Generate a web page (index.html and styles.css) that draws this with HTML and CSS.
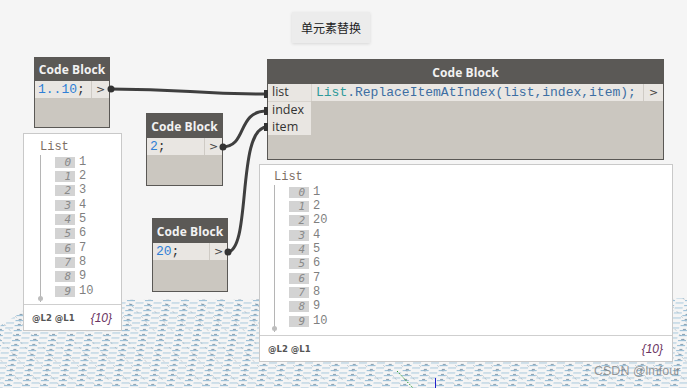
FILE: index.html
```html
<!DOCTYPE html>
<html>
<head>
<meta charset="utf-8">
<link rel="stylesheet" href="styles.css">
</head>
<body>
<div class="canvas">
  <svg class="floor" width="687" height="388" viewBox="0 0 687 388">
    <defs>
      <pattern id="tiles" width="18" height="5" patternUnits="userSpaceOnUse" patternTransform="skewX(-10)">
        <line x1="0" y1="0.5" x2="8" y2="0.5" stroke="#97bdd5" stroke-width="1"/>
        <line x1="9" y1="3" x2="17" y2="3" stroke="#a3c6dc" stroke-width="1"/>
        <line x1="3" y1="4.5" x2="6" y2="4.5" stroke="#8098aa" stroke-width="0.9"/>
      </pattern>
      <pattern id="diag" width="18" height="18" patternUnits="userSpaceOnUse" patternTransform="skewX(42)">
        <line x1="0" y1="0" x2="0" y2="18" stroke="#60788a" stroke-width="0.9" stroke-dasharray="2 3"/>
      </pattern>
    </defs>
    <polygon points="0,326 30,306 70,300 687,298 687,388 0,388" fill="url(#tiles)"/>
    <polygon points="0,326 30,306 70,300 687,298 687,388 0,388" fill="url(#diag)" opacity="0.7"/>
    <line x1="397" y1="371" x2="413" y2="388" stroke="#2a9a2a" stroke-width="1" stroke-dasharray="1.5 1.5"/>
    <line x1="435.5" y1="378" x2="435.5" y2="388" stroke="#2222cc" stroke-width="1"/>
  </svg>

  <div class="title">单元素替换</div>

  <div class="watch w-left">
    <div class="watch-body">
      <div class="wl">List</div>
      <div class="tree">
        <div class="row"><span class="ix">0</span><span class="v">1</span></div>
        <div class="row"><span class="ix">1</span><span class="v">2</span></div>
        <div class="row"><span class="ix">2</span><span class="v">3</span></div>
        <div class="row"><span class="ix">3</span><span class="v">4</span></div>
        <div class="row"><span class="ix">4</span><span class="v">5</span></div>
        <div class="row"><span class="ix">5</span><span class="v">6</span></div>
        <div class="row"><span class="ix">6</span><span class="v">7</span></div>
        <div class="row"><span class="ix">7</span><span class="v">8</span></div>
        <div class="row"><span class="ix">8</span><span class="v">9</span></div>
        <div class="row"><span class="ix">9</span><span class="v">10</span></div>
      </div>
    </div>
    <div class="watch-foot"><span class="lv">@L2 @L1</span><span class="cnt">{10}</span></div>
  </div>

  <div class="watch w-right">
    <div class="watch-body">
      <div class="wl">List</div>
      <div class="tree">
        <div class="row"><span class="ix">0</span><span class="v">1</span></div>
        <div class="row"><span class="ix">1</span><span class="v">2</span></div>
        <div class="row"><span class="ix">2</span><span class="v">20</span></div>
        <div class="row"><span class="ix">3</span><span class="v">4</span></div>
        <div class="row"><span class="ix">4</span><span class="v">5</span></div>
        <div class="row"><span class="ix">5</span><span class="v">6</span></div>
        <div class="row"><span class="ix">6</span><span class="v">7</span></div>
        <div class="row"><span class="ix">7</span><span class="v">8</span></div>
        <div class="row"><span class="ix">8</span><span class="v">9</span></div>
        <div class="row"><span class="ix">9</span><span class="v">10</span></div>
      </div>
    </div>
    <div class="watch-foot"><span class="lv">@L2 @L1</span><span class="cnt">{10}</span></div>
  </div>

  <div class="node n1">
    <div class="head">Code Block</div>
    <div class="inrow"><span class="code"><span class="num">1..10</span>;</span><span class="out">&gt;</span></div>
    <div class="bodyfill"></div>
  </div>

  <div class="node n2">
    <div class="head">Code Block</div>
    <div class="inrow"><span class="code"><span class="num">2</span>;</span><span class="out">&gt;</span></div>
    <div class="bodyfill"></div>
  </div>

  <div class="node n3">
    <div class="head">Code Block</div>
    <div class="inrow"><span class="code"><span class="num">20</span>;</span><span class="out">&gt;</span></div>
    <div class="bodyfill"></div>
  </div>

  <div class="node nmain">
    <div class="head">Code Block</div>
    <div class="mainrow">
      <div class="ports">
        <div class="port first">list</div>
        <div class="port">index</div>
        <div class="port">item</div>
      </div>
      <div class="inrow wide"><span class="code"><span class="cls">List</span>.ReplaceItemAtIndex(list,index,item);</span><span class="out">&gt;</span></div>
    </div>
  </div>

  <svg class="wires" width="687" height="388" viewBox="0 0 687 388">
    <path d="M110 89 C 190 89, 190 94, 267 94" fill="none" stroke="#3f3f3f" stroke-width="3"/>
    <path d="M222 147 C 248 147, 236 111, 267 111" fill="none" stroke="#3f3f3f" stroke-width="3"/>
    <path d="M227 252 C 252 252, 236 127, 267 127" fill="none" stroke="#3f3f3f" stroke-width="3"/>
    <circle cx="111" cy="89" r="3.5" fill="#333"/>
    <circle cx="223" cy="147" r="3.5" fill="#333"/>
    <circle cx="228" cy="252" r="3.5" fill="#333"/>
    <rect x="264" y="90" width="4" height="8" fill="#333"/>
    <rect x="264" y="107" width="4" height="8" fill="#333"/>
    <rect x="264" y="123" width="4" height="8" fill="#333"/>
  </svg>

  <div class="mark">CSDN @lmfour</div>
</div>
</body>
</html>
```

FILE: styles.css
```css
* { box-sizing: border-box; }
html, body { margin: 0; padding: 0; }
body { background: #f5f5f5; font-family: "Open Sans", "Noto Sans", sans-serif; }

.canvas { position: relative; width: 687px; height: 388px; overflow: hidden; background: #f5f5f5; }

.floor { position: absolute; left: 0; top: 0; }
.wires { position: absolute; left: 0; top: 0; pointer-events: none; }

.title {
  position: absolute; left: 292px; top: 12px; width: 78px; height: 31px;
  background: #ececec; box-shadow: 0 1px 3px rgba(0,0,0,0.12);
  font-family: "Noto Sans CJK SC", sans-serif; font-size: 12px; color: #222;
  display: flex; align-items: center; justify-content: center;
}

/* code nodes */
.node {
  position: absolute; background: #cbc7c0; border: 1px solid #5a5855;
  display: flex; flex-direction: column;
}
.head {
  background: #5b5956; color: #f2f2f2; font-weight: 700; font-size: 12px;
  height: 23px; display: flex; align-items: center; justify-content: center;
  letter-spacing: 0.1px;
}
.inrow {
  background: #e9e6e2; height: 17px; display: flex; align-items: stretch;
}
.code {
  flex: 1; font-family: "Liberation Mono", "DejaVu Sans Mono", monospace; font-size: 13px;
  color: #333; padding-left: 3px; line-height: 17px; white-space: pre;
}
.num { color: #2f7fd6; }
.out {
  width: 18px; border-left: 1px solid #cfcbc5; color: #444; font-size: 11px;
  display: flex; align-items: center; justify-content: center;
  font-family: "DejaVu Sans", sans-serif;
}
.bodyfill { flex: 1; }

.n1 { left: 34px; top: 57px; width: 76px; height: 71px; }
.n2 { left: 146px; top: 113px; width: 77px; height: 73px; }
.n2 .head { height: 24px; }
.n3 { left: 152px; top: 218px; width: 76px; height: 74px; }
.n3 .head { height: 24px; }

.nmain { left: 267px; top: 59px; width: 397px; height: 101px; }
.nmain .head { height: 24px; padding-left: 0; }
.mainrow { display: flex; align-items: flex-start; }
.ports { width: 43px; background: #e9e6e2; display: flex; flex-direction: column; }
.port { font-size: 12.5px; color: #333; height: 16.5px; line-height: 16px; padding-left: 4px; }
.port.first { height: 18px; border-bottom: 1px solid #d8d4ce; }
.inrow.wide { flex: 1; border-left: 1px solid #d8d4ce; }
.inrow.wide .code { color: #3d6ea3; padding-left: 4px; }
.cls { color: #2e9a9a; }
.inrow.wide .out { width: 20px; }

/* watch panels */
.watch {
  position: absolute; background: #fff; border: 1px solid #c9c9c9;
  display: flex; flex-direction: column;
}
.w-left { left: 23px; top: 133px; width: 99px; height: 198px; }
.w-right { left: 259px; top: 164px; width: 414px; height: 198px; }
.watch-body { flex: 1; position: relative; padding: 6px 0 0 16px; }
.w-right .watch-body { padding: 5px 0 0 14px; }
.wl {
  font-family: "Liberation Mono", "DejaVu Sans Mono", monospace; font-size: 12px;
  color: #7d6e63; line-height: 14px;
}
.tree {
  margin-left: 0; border-left: 1px solid #b5b5b5; padding-left: 14px; position: relative;
  margin-top: 1px; padding-bottom: 4px;
}
.tree::after {
  content: ""; position: absolute; left: -3px; bottom: 1px; width: 5px; height: 5px;
  border-radius: 50%; background: #bdbdbd;
}
.row { display: flex; align-items: center; height: 14.33px; }
.ix {
  width: 20px; height: 11px; background: #d3d3d3; color: #8a8a8a;
  font-family: "DejaVu Sans Mono", "Liberation Mono", monospace; font-size: 11px; font-style: italic;
  text-align: right; padding-right: 4px; line-height: 11px;
}
.v {
  margin-left: 4px; color: #7f7f7f; font-size: 12px; line-height: 11px;
  font-family: "Liberation Mono", "DejaVu Sans Mono", monospace;
}
.watch-foot {
  height: 26px; border-top: 1px solid #cfcfcf; display: flex; align-items: center;
  justify-content: space-between; padding: 0 9px 0 8px;
}
.lv { font-size: 8.5px; font-weight: 700; color: #555; font-family: "DejaVu Sans", sans-serif; }
.cnt { font-size: 12px; font-style: italic; color: #6b3361; font-family: "Liberation Sans", sans-serif; }

.mark {
  position: absolute; left: 594px; top: 364px; font-size: 12.5px; color: rgba(120,120,120,0.75);
  font-family: "Liberation Sans", sans-serif;
}
```
